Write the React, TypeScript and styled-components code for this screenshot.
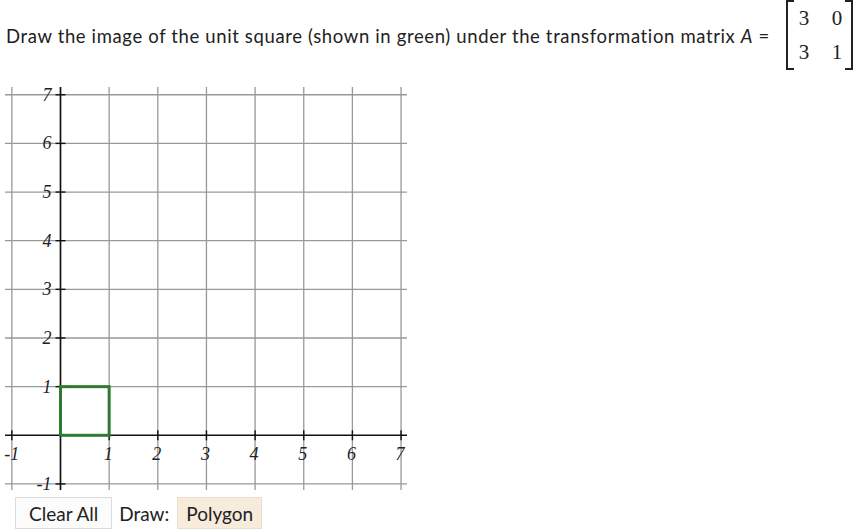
import * as React from 'react';
import styled, { createGlobalStyle } from 'styled-components';

const GlobalStyle = createGlobalStyle`
  html, body {
    margin: 0;
    padding: 0;
    background: #ffffff;
  }
  body {
    font-family: Lato, "Open Sans", sans-serif;
    color: #222;
  }
`;

// graph geometry (svg coords, svg placed at page y=84)
const U = 48.65;
const OX = 60.5;
const OY = 351.3;
const X_MIN = 5;
const X_MAX = 407;
const Y_TOP = 3;
const Y_BOT = 406;
const px = (v: number) => OX + v * U;
const py = (v: number) => OY - v * U;
const steps = [-1, 1, 2, 3, 4, 5, 6, 7];

const Page = styled.div`
  width: 856px;
  height: 532px;
  overflow: hidden;
`;

const Header = styled.div`
  display: flex;
  align-items: center;
  height: 70px;
  padding-left: 6px;
  box-sizing: border-box;
`;

const Prompt = styled.span`
  font-size: 18.5px;
  letter-spacing: 0.63px;
  white-space: nowrap;
  margin-top: 2px;
  em {
    font-style: italic;
  }
`;

const Matrix = styled.span`
  position: relative;
  display: inline-grid;
  grid-template-columns: 20px 20px;
  column-gap: 13px;
  row-gap: 6px;
  margin-left: 16px;
  padding: 6px 6px 6px 8px;
  font-family: "Liberation Serif", serif;
  font-size: 21px;
  line-height: 28px;
  text-align: center;
  &::before, &::after {
    content: '';
    position: absolute;
    top: 2px;
    bottom: 2px;
    width: 6px;
    border: 2px solid #222;
  }
  &::before {
    left: 0;
    border-right: none;
  }
  &::after {
    right: 0;
    border-left: none;
  }
`;

const Graph = styled.svg`
  display: block;
  margin-top: 14px;
`;

const Toolbar = styled.div`
  display: flex;
  align-items: center;
  gap: 7px;
  margin-top: 3px;
  padding-left: 15px;
`;

const Button = styled.button<{ $active?: boolean }>`
  height: 32px;
  padding: 0 ${p => (p.$active ? 8 : 13)}px;
  font-family: Lato, "Open Sans", sans-serif;
  font-size: 19px;
  color: #222;
  background: ${p => (p.$active ? '#f7ebdc' : '#fcfcfc')};
  border: 1px solid ${p => (p.$active ? '#eadfcf' : '#dcdcdc')};
  border-radius: 0;
`;

const Label = styled.span`
  font-size: 19px;
  margin-right: 1px;
`;

const App = () => {
  return (
    <>
      <GlobalStyle />
      <Page>
        <Header>
          <Prompt>
            Draw the image of the unit square (shown in green) under the transformation matrix <em>A</em> =
          </Prompt>
          <Matrix>
            <span>3</span>
            <span>0</span>
            <span>3</span>
            <span>1</span>
          </Matrix>
        </Header>
        <Graph width={412} height={410}>
          {[...steps, 0].map(v => (
            <line key={'v' + v} x1={px(v)} x2={px(v)} y1={Y_TOP} y2={Y_BOT} stroke="#999" strokeWidth={1.3} />
          ))}
          {steps.map(v => (
            <line key={'h' + v} x1={X_MIN} x2={X_MAX} y1={py(v)} y2={py(v)} stroke="#999" strokeWidth={1.3} />
          ))}
          <line x1={X_MIN} x2={X_MAX} y1={OY} y2={OY} stroke="#111" strokeWidth={1.6} />
          <line x1={OX} x2={OX} y1={Y_TOP} y2={Y_BOT} stroke="#111" strokeWidth={1.6} />
          {steps.map(v => (
            <g key={'t' + v}>
              <line x1={px(v)} x2={px(v)} y1={OY - 5} y2={OY + 5} stroke="#111" strokeWidth={1.4} />
              <line x1={OX - 5} x2={OX + 5} y1={py(v)} y2={py(v)} stroke="#111" strokeWidth={1.4} />
              <text
                x={px(v) - (v < 0 ? 0 : 1)}
                y={OY + 25}
                textAnchor="middle"
                fontFamily="'Liberation Serif', serif"
                fontStyle="italic"
                fontSize={18}
                fill="#222"
              >
                {v}
              </text>
              <text
                x={OX - 9}
                y={py(v) + 6}
                textAnchor="end"
                fontFamily="'Liberation Serif', serif"
                fontStyle="italic"
                fontSize={18}
                fill="#222"
              >
                {v}
              </text>
            </g>
          ))}
          <rect x={OX} y={py(1)} width={U} height={U} fill="none" stroke="#2f7a2f" strokeWidth={3} />
        </Graph>
        <Toolbar>
          <Button>Clear All</Button>
          <Label>Draw:</Label>
          <Button $active>Polygon</Button>
        </Toolbar>
      </Page>
    </>
  );
};

export default App;
